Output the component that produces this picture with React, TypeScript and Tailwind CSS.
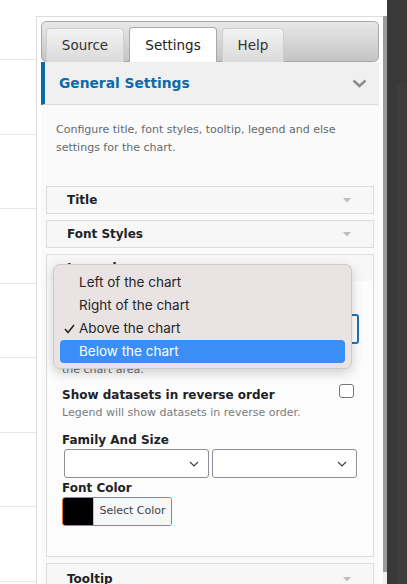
import React from "react";

const verdana = { fontFamily: '"DejaVu Sans", Verdana, sans-serif' };

const MENU = ["Left of the chart", "Right of the chart", "Above the chart", "Below the chart"];

function Caret() {
  return (
    <svg width="8" height="5" viewBox="0 0 8 5" className="mr-[22px]">
      <polygon points="0,0 8,0 4,4.5" fill="#bdbdbd" />
    </svg>
  );
}

function SectionHead({ title, className = "" }: { title: string; className?: string }) {
  return (
    <div className={`flex h-[26px] items-center justify-between bg-[#f7f7f7] pl-[20px] ${className}`}>
      <span className="text-[12px] font-bold text-[#1d2327]">{title}</span>
      <Caret />
    </div>
  );
}

function SelectBox() {
  return (
    <div className="flex h-[29px] w-[145px] items-center justify-end rounded-[3px] border border-[#8c8f94] bg-white pr-[9px]">
      <svg width="10" height="6" viewBox="0 0 10 6">
        <polyline points="1,1 5,5 9,1" fill="none" stroke="#3c434a" strokeWidth="1.2" />
      </svg>
    </div>
  );
}

export default function App() {
  return (
    <div className="relative flex h-[584px] w-[407px] overflow-hidden bg-white" style={verdana}>
      {/* list behind the panel */}
      <div className="w-[36px] shrink-0">
        <div className="h-[59px]" />
        {Array.from({ length: 8 }, (_, i) => `row-${i}`).map((key) => (
          <div key={key} className="h-[74.5px] border-t border-[#e6e6e6]" />
        ))}
      </div>

      {/* editor panel */}
      <div className="mt-[16px] w-[347px] shrink-0 border-l border-t border-[#dcdcdc] bg-white px-[4px] pt-[4px]">
        <div className="flex h-[41px] items-end gap-[5px] rounded-[5px] border border-[#a8a8a8] bg-gradient-to-b from-[#e8e8e8] to-[#c4c4c4] pl-[4px]">
          <div className="-mb-px flex h-[34px] w-[78px] items-center justify-center rounded-t-[4px] border border-b-0 border-[#cfcfcf] bg-gradient-to-b from-[#f3f3f3] to-[#dadada] text-[13.5px] text-[#333]">
            Source
          </div>
          <div className="-mb-px flex h-[35px] w-[88px] items-center justify-center rounded-t-[4px] border border-b-0 border-[#a8a8a8] bg-white text-[13.5px] text-[#222]">
            Settings
          </div>
          <div className="-mb-px flex h-[34px] w-[62px] items-center justify-center rounded-t-[4px] border border-b-0 border-[#cfcfcf] bg-gradient-to-b from-[#f3f3f3] to-[#dadada] text-[13.5px] text-[#333]">
            Help
          </div>
        </div>

        <div className="flex h-[43px] items-center justify-between border-b border-l-[4px] border-b-[#dcdcde] border-l-[#0a6aa6] bg-[#f0f0f1] pl-[14px] pr-[12px]">
          <span className="text-[13.8px] font-bold text-[#0e6aa6]">General Settings</span>
          <svg width="15" height="9" viewBox="0 0 15 9">
            <polyline points="1.5,1.5 7.5,7 13.5,1.5" fill="none" stroke="#8c8c8c" strokeWidth="2.4" />
          </svg>
        </div>

        <div className="h-[600px] bg-[#fafafa] px-[5px]">
          <p className="px-[10px] pt-[16px] text-[11px] leading-[18px] text-[#646970]">
            Configure title, font styles, tooltip, legend and else settings for the chart.
          </p>

          <div className="mt-[29px] border border-[#dcdcde]">
            <SectionHead title="Title" />
          </div>
          <div className="mt-[6px] border border-[#dcdcde]">
            <SectionHead title="Font Styles" />
          </div>

          <div className="mt-[6px] border border-[#dcdcde]">
            <SectionHead title="Legend" />
            <div className="h-[275px] bg-[#fcfcfc] pl-[15px] pr-[14px] pt-[8px]">
              <div className="text-[12px] font-bold leading-[14px] text-[#1d2327]">Position</div>
              <div className="ml-[2px] mt-[11px] h-[30px] rounded-[3px] border-2 border-[#2271b1] bg-white" />
              <p className="mt-[6px] text-[11px] leading-[13px] text-[#646970]">
                Position of the legend in relation to
                <br />
                the chart area.
              </p>
              <div className="mt-[8px] flex items-start justify-between">
                <span className="mt-[4px] text-[12px] font-bold leading-[14px] text-[#1d2327]">
                  Show datasets in reverse order
                </span>
                <span className="mr-[5px] h-[14px] w-[15px] rounded-[3px] border border-[#767676] bg-white" />
              </div>
              <p className="mt-[4px] text-[11px] leading-[14px] text-[#787c82]">
                Legend will show datasets in reverse order.
              </p>
              <div className="mt-[13px] text-[12px] font-bold leading-[14px] text-[#1d2327]">Family And Size</div>
              <div className="ml-[2px] mt-[2px] flex gap-[3px]">
                <SelectBox />
                <SelectBox />
              </div>
              <div className="mt-[3px] text-[12px] font-bold leading-[14px] text-[#1d2327]">Font Color</div>
              <div className="mt-[2px] flex h-[29px] w-[110px] overflow-hidden rounded-[3px] border border-[#e26f26]">
                <div className="w-[30px] bg-black" />
                <div className="flex flex-1 items-center justify-center border-l border-[#c3c4c7] bg-[#f6f7f7] text-[11px] text-[#3c434a]">
                  Select Color
                </div>
              </div>
            </div>
          </div>

          <div className="mt-[6px] border border-[#dcdcde]">
            <SectionHead title="Tooltip" className="h-[30px]" />
          </div>
        </div>
      </div>

      {/* scrollbar-ish strip and dark backdrop */}
      <div className="flex w-[4px] shrink-0 flex-col">
        <div className="h-[16px] bg-white" />
        <div className="h-[556px] bg-[#9b9b9b]" />
        <div className="flex-1 bg-[#f0f0f0]" />
      </div>
      <div className="flex w-[20px] shrink-0 flex-col bg-[#393939]">
        <div className="ml-[10px] mt-[83px] flex-1 bg-[#3d3d3d]" />
      </div>

      {/* open native select menu */}
      <div
        className="absolute left-[53px] top-[264px] w-[299px] rounded-[7px] border border-[#cfc9ca] bg-[#e9e3e4] px-[6px] pb-[5px] pt-[6px] shadow-[0_4px_12px_rgba(0,0,0,0.18)]"
        style={{ fontFamily: 'Inter, "Noto Sans", sans-serif' }}
      >
        {MENU.map((item, i) => (
          <div
            key={item}
            className={`relative flex h-[23px] items-center rounded-[4px] pl-[19px] text-[13.5px] ${
              i === 3 ? "bg-[#3a8ef6] text-white" : "text-[#262626]"
            }`}
          >
            {i === 2 && (
              <svg width="11" height="10" viewBox="0 0 11 10" className="absolute left-[4px] top-[7px]">
                <polyline points="1,5 4,8.5 10,1" fill="none" stroke="#262626" strokeWidth="1.6" />
              </svg>
            )}
            {item}
          </div>
        ))}
      </div>
    </div>
  );
}
